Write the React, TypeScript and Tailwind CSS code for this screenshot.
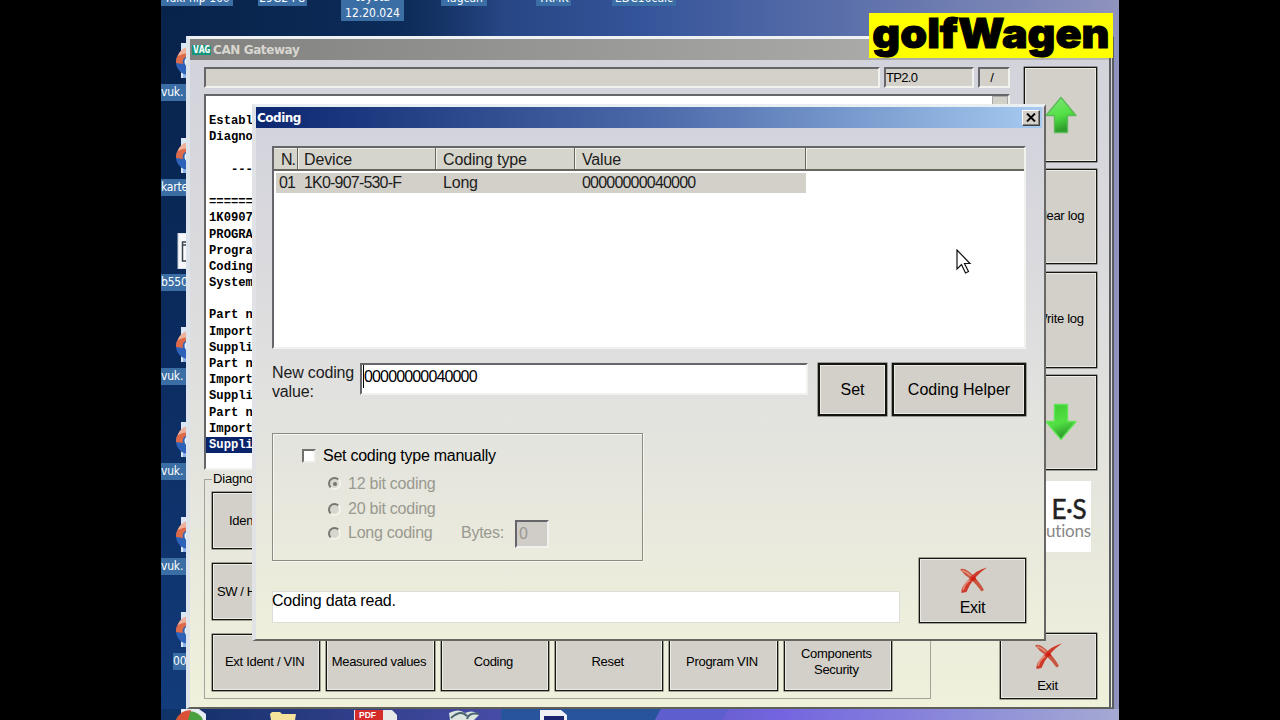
import type { ReactNode } from 'react'
import clsx from 'clsx'

const topLabels = [
  { text: 'Yuki hip 160', pos: 'left-0 w-[72px] -top-[10px]' },
  { text: '29G2 FU', pos: 'left-[97px] w-[49px] -top-[10px]' },
  { text: 'toyota 12.20.024', pos: 'left-[180px] w-[63px] -top-[11px]' },
  { text: 'Yagcan', pos: 'left-[280px] w-[46px] -top-[10px]' },
  { text: 'TKMK', pos: 'left-[375px] w-[35px] -top-[10px]' },
  { text: 'EDC16calc', pos: 'left-[451px] w-[64px] -top-[10px]' },
]

const sideIcons = [
  { text: 'vuk.', doc: false },
  { text: 'karte', doc: false },
  { text: 'b550', doc: true },
  { text: 'vuk.', doc: false },
  { text: 'vuk.', doc: false },
  { text: 'vuk.', doc: false },
  { text: '00', doc: false },
]

const logLines = [
  '',
  'Establ',
  'Diagno',
  '',
  '   ---',
  '',
  '======',
  '1K0907',
  'PROGRA',
  'Progra',
  'Coding',
  'System',
  '',
  'Part n',
  'Import',
  'Suppli',
  'Part n',
  'Import',
  'Suppli',
  'Part n',
  'Import',
  'Suppli',
]

const actions = ['Ext Ident / VIN', 'Measured values', 'Coding', 'Reset', 'Program VIN', 'Components Security']

function Swirl() {
  return (
    <svg viewBox="0 0 26 36" className="h-9 w-[26px]">
      <path d="M7 0h19v35H7z" fill="#dbe6f6" />
      <path d="M9 30h17v5H9z" fill="#8fb4ea" />
      <circle cx="15" cy="19" r="13" fill="#2e62b8" />
      <path d="M2 20A13 13 0 0 1 26 12L19 15A6 6 0 0 0 9 21z" fill="#dd6a48" />
      <path d="M4 13A13 13 0 0 1 26 8L20 11Q11 9 4 13z" fill="#eeb19b" />
      <circle cx="17" cy="19" r="6.500" fill="#f2f5fb" />
      <path d="M13 14v9h6" fill="none" stroke="#445" strokeWidth="1.5" />
    </svg>
  )
}

function DocIcon() {
  return (
    <svg viewBox="0 0 26 36" className="h-9 w-[26px]">
      <path d="M4 0h22v36H4z" fill="#f6f8fa" />
      <path d="M4 0h22v36H4z" fill="none" stroke="#c5ccd6" />
      <path d="M26 9H8.500v19h18M8.500 12h18" fill="none" stroke="#3c4450" strokeWidth="1.5" />
    </svg>
  )
}

function ArrowIcon({ down = false }: { down?: boolean }) {
  const id = down ? 'green-down' : 'green-up'
  return (
    <svg viewBox="0 0 32 38" className="h-[38px] w-8">
      <defs>
        <linearGradient id={id} x1="0" y1="0" x2="0.3" y2="1">
          <stop offset="0" stopColor={down ? '#3ccb30' : '#82e87c'} />
          <stop offset="0.6" stopColor="#52e044" />
          <stop offset="1" stopColor="#2c9c2b" />
        </linearGradient>
      </defs>
      <path
        d={down ? 'M16 36.500L31 18.500H22.500V1.500H9.500V18.500H1z' : 'M16 1.500L31 19.500H22.500V36.500H9.500V19.500H1z'}
        fill={`url(#${id})`}
        stroke={down ? '#62e655' : '#5cba58'}
        strokeWidth="1.4"
        strokeLinejoin="round"
      />
    </svg>
  )
}

function CrossIcon() {
  return (
    <svg viewBox="0 0 28 26" className="h-[26px] w-7">
      <path d="M1 2.500Q4 .5 9 4Q15 8 19 14Q23 19 25 23L22.500 24.500Q17 17 11.500 12Q5 8 1 2.500z" fill="#c85540" />
      <path d="M28 .5Q21 5 16 11Q10 18 7.500 25L2.500 26Q1 21 10 12Q17 3 28 .5z" fill="#cf3b2b" />
      <path d="M3 3.500Q8 5 12 9M4 23Q6 16 11 13" fill="none" stroke="#e58f7b" strokeWidth="1.6" />
      <path d="M12 11L16 9L17 13L13 14z" fill="#d21f12" />
    </svg>
  )
}

function PushButton({ className, children }: { className?: string; children: ReactNode }) {
  return (
    <button
      className={clsx(
        'flex items-center justify-center border-[#15150f] bg-[#d3d0c9] text-center text-black shadow-[inset_0_0_0_1px_#ecebe5,0_0_0_0.5px_#55554f]',
        className,
      )}
    >
      {children}
    </button>
  )
}

function Sunken({ className, children }: { className?: string; children?: ReactNode }) {
  return (
    <div
      className={clsx(
        'border-2 border-t-[#66666a] border-r-[#f1f1ee] border-b-[#f1f1ee] border-l-[#66666a]',
        className,
      )}
    >
      {children}
    </div>
  )
}

function GatewayWindow() {
  return (
    <section className="absolute top-9 left-[25px] flex h-[673px] w-[928px] flex-col border-t-[3px] border-r-[5px] border-b-2 border-l-4 border-t-[#eef1f4] border-r-[#5b5e60] border-b-[#5d5f58] border-l-[#dde3ea] bg-linear-to-b from-[#d2d2dc] via-[#dfdfde] to-[#f0f1db] [border-right-style:double]">
      <header className="flex h-[21px] shrink-0 items-center bg-linear-to-r from-[#81817f] to-[#b8b8b6] pl-0.5">
        <span className="flex h-2.5 w-[19px] items-center justify-center bg-[#15957d] font-['DejaVu_Sans_Mono'] text-[10px] font-bold tracking-[-0.4px] text-white">
          VAG
        </span>
        <h1 className="ml-0.5 font-['DejaVu_Sans'] text-[12px] font-bold tracking-[-0.4px] text-[#d8d6d0]">
          CAN Gateway
        </h1>
      </header>
      <div className="flex flex-col pt-[7px] pl-3.5">
        <div className="flex gap-3.5">
          <div className="flex w-[806px] flex-col">
            <div className="flex h-[21px] gap-1">
              <Sunken className="w-[676px] bg-[#d3d1c9]" />
              <Sunken className="flex w-[90px] items-center bg-[#d3d1c9] text-[13px] leading-none tracking-[-0.7px]">
                TP2.0
              </Sunken>
              <Sunken className="flex w-8 items-center justify-center bg-[#d3d1c9] pr-1 text-[13px] leading-none">
                /
              </Sunken>
            </div>
            <Sunken className="mt-1.5 flex h-[376px] justify-between bg-white">
              <div className="w-[180px] pt-px font-['Liberation_Mono'] text-[12.2px] leading-[16.2px] font-bold whitespace-pre">
                {logLines.map((line, i) => (
                  <div
                    key={i}
                    className={clsx('h-[16.2px] pl-[3px]', i === logLines.length - 1 && 'bg-[#0a246a] text-white')}
                  >
                    {line}
                  </div>
                ))}
              </div>
              <div className="flex w-4 flex-col bg-[#eceae6]">
                <div className="flex h-4 items-center justify-center border border-[#aaa] bg-[#d3d0c9] pt-1 text-[7px]">
                  ▲
                </div>
              </div>
            </Sunken>
          </div>
          <div className="flex h-[403px] w-[73px] flex-col justify-between text-[13px] tracking-[-0.3px]">
            <PushButton className="h-[95px] border">
              <ArrowIcon />
            </PushButton>
            <PushButton className="h-[95px] border pr-0.5 pb-0.5">Clear log</PushButton>
            <PushButton className="h-[96px] border pr-0.5 pb-0.5">Write log</PushButton>
            <PushButton className="h-[95px] border">
              <ArrowIcon down />
            </PushButton>
          </div>
        </div>
        <div className="flex w-[893px] justify-between">
          <fieldset className="mt-px h-[228px] w-[727px] border border-[#a3a39a] pl-[7px] text-[13px]">
            <legend className="h-4 px-px leading-4 tracking-[-0.2px]">Diagno</legend>
            <div className="flex w-[680px] flex-col gap-3.5 pt-[5px]">
              <PushButton className="h-[57px] w-[108px] border">
                <span className="w-full pl-4 text-left tracking-[-0.3px]">Iden</span>
              </PushButton>
              <PushButton className="h-[57px] w-[108px] border">
                <span className="w-full pl-1 text-left tracking-[-0.4px]">SW / H</span>
              </PushButton>
              <div className="grid grid-cols-6 gap-x-1.5">
                {actions.map((a) => (
                  <PushButton key={a} className="h-[57px] border pr-[3px] pb-0.5 leading-4 tracking-[-0.3px]">
                    {a}
                  </PushButton>
                ))}
              </div>
            </div>
          </fieldset>
          <div className="flex h-[229px] flex-col items-end justify-between pt-[11px]">
            <div className="mr-1.5 flex h-[71px] w-[90px] flex-col items-end bg-white pt-[15px] font-['Lato']">
              <span className="h-[26px] pr-[5px] text-[26px] leading-[26px] tracking-[-0.5px] text-[#222] [-webkit-text-stroke:0.5px_#222]">
                E·S
              </span>
              <span className="h-5 text-[17px] leading-[18px] tracking-[-0.2px] text-[#888]">utions</span>
            </div>
            <PushButton className="h-[66px] w-[97px] flex-col gap-[9px] border pt-1 pr-0.5 text-[13px] leading-4 tracking-[-0.3px]">
              <CrossIcon />
              Exit
            </PushButton>
          </div>
        </div>
      </div>
    </section>
  )
}

function Radio({ label, checked = false }: { label: string; checked?: boolean }) {
  return (
    <label className="flex items-center text-[#99998f]">
      <span className="mr-[7px] flex size-[13px] items-center justify-center rounded-full border-2 border-t-[#77776f] border-r-[#f4f4ea] border-b-[#f4f4ea] border-l-[#77776f] bg-[#d8d6ce]">
        {checked && <span className="size-1 rounded-full bg-[#77776f]" />}
      </span>
      {label}
    </label>
  )
}

function CodingDialog() {
  return (
    <section className="absolute top-[104px] left-[91px] flex h-[537px] w-[794px] flex-col border-t-[3px] border-r-2 border-b-2 border-l-4 border-t-[#e9eef2] border-r-[#686866] border-b-[#686860] border-l-[#e0e2e5] bg-linear-to-b from-[#d2d2dc] via-[#e0e0df] to-[#efefdc] text-[16px]">
      <header className="mr-0.5 flex h-[21px] shrink-0 items-center justify-between bg-linear-to-r from-[#0c2770] via-[#4b68a8] to-[#a6caf0] pr-0.5 pl-px">
        <h2 className="font-['DejaVu_Sans'] text-[12px] font-bold tracking-[-0.5px] text-white">Coding</h2>
        <button
          aria-label="Close"
          className="flex h-4 w-[18px] items-center justify-center border border-t-white border-r-[#404040] border-b-[#404040] border-l-white bg-[#d4d0c8] shadow-[inset_-1px_-1px_0_#808080]"
        >
          <svg viewBox="0 0 10 9" className="h-[9px] w-2.5">
            <path d="M1 .5l8 8M9 .5l-8 8" stroke="#000" strokeWidth="1.9" />
          </svg>
        </button>
      </header>

      <div className="flex flex-col pt-[18px] pl-4">
        <Sunken className="h-[203px] w-[754px] bg-white">
          <div className="flex h-[23px] bg-[#d6d5cb] leading-[23px] tracking-[-0.15px] text-[#1c1c1c] shadow-[inset_0_1px_0_#ecebe4]">
            <div className="w-6 border-r border-b-2 border-[#66665f] pl-[7px] tracking-[-1px]">N.</div>
            <div className="w-[138px] border-r border-b-2 border-[#66665f] pl-1.5 shadow-[inset_1px_0_0_#f2f1ea]">
              Device
            </div>
            <div className="w-[139px] border-r border-b-2 border-[#66665f] pl-[7px] shadow-[inset_1px_0_0_#f2f1ea]">
              Coding type
            </div>
            <div className="w-[231px] border-r border-b-2 border-[#66665f] pl-[7px] shadow-[inset_1px_0_0_#f2f1ea]">
              Value
            </div>
            <div className="flex-1 border-b-2 border-[#66665f] shadow-[inset_1px_0_0_#f2f1ea]" />
          </div>
          <div className="mt-0.5 ml-0.5 flex h-5 w-[530px] bg-[#d3d0ca] leading-5 tracking-[-0.8px] text-[#1c1c1c]">
            <div className="w-[28px] pl-[3px]">01</div>
            <div className="w-[139px]">1K0-907-530-F</div>
            <div className="w-[139px] tracking-[-0.2px]">Long</div>
            <div>00000000040000</div>
          </div>
        </Sunken>

        <div className="mt-3.5 flex h-[53px]">
          <div className="w-[88px] pt-px leading-[18.5px] tracking-[-0.15px] text-[#1c1c1c]">
            New coding
            <br />
            value:
          </div>
          <Sunken className="flex h-8 w-[448px] bg-white pl-px">
            <span className="h-[23px] border-l border-black leading-[23px] tracking-[-0.85px]">00000000040000</span>
          </Sunken>
          <PushButton className="ml-2.5 w-[69px] border-2">Set</PushButton>
          <PushButton className="ml-[5px] w-[134px] border-2">Coding Helper</PushButton>
        </div>

        <div className="mt-[17px] flex h-[190px] w-[754px] items-end justify-between">
          <div className="flex h-full flex-col justify-between">
            <div className="h-32 w-[371px] border border-[#8c8c85] pt-[13px] pl-[29px] shadow-[1px_1px_0_#f7f7ee,inset_1px_1px_0_#f7f7ee]">
              <label className="flex h-[18px] items-center tracking-[-0.25px]">
                <span className="mr-[7px] size-3.5 border-2 border-t-[#70706c] border-r-[#ecece4] border-b-[#ecece4] border-l-[#70706c] bg-white" />
                Set coding type manually
              </label>
              <div className="flex flex-col pl-[26px] tracking-[-0.25px]">
                <div className="flex h-[37px] items-center">
                  <Radio label="12 bit coding" checked />
                </div>
                <div className="flex h-3.5 items-center">
                  <Radio label="20 bit coding" />
                </div>
                <div className="flex h-[34px] items-center text-[#99998f]">
                  <div className="w-[133px]">
                    <Radio label="Long coding" />
                  </div>
                  <span className="w-[54px]">Bytes:</span>
                  <Sunken className="mt-0.5 h-7 w-[34px] bg-[#d0cdc8] pl-0.5 leading-6">0</Sunken>
                </div>
              </div>
            </div>
            <div className="h-8 w-[628px] border border-[#deded8] bg-white leading-[18px] tracking-[-0.2px]">
              <span className="-ml-px">Coding data read.</span>
            </div>
          </div>
          <PushButton className="h-[65px] w-[107px] flex-col gap-1.5 border pt-[3px] leading-[18px] tracking-[-0.3px]">
            <CrossIcon />
            Exit
          </PushButton>
        </div>
      </div>
    </section>
  )
}

function DesktopFooter() {
  return (
    <div className="absolute inset-x-0 bottom-0 h-[11px] overflow-hidden bg-linear-to-r from-[#0e2e66] via-[#7465df] via-65% to-[#a5a9d2]">
      <svg viewBox="0 0 958 11" className="h-[11px] w-[958px]">
        <path d="M0 0H40V11H0z" fill="#113468" />
        <path d="M340 0H500L494 11H340z" fill="#28549d" />
        <path d="M500 0H567L561 11H494z" fill="#5e5ecf" />
        <path d="M20 0h18l7 5v6H20z" fill="#e8eef5" />
        <path d="M15 11a14 12 0 0 1 27 0z" fill="#48a13e" />
        <path d="M15 11Q19 1 30 1L27 11z" fill="#da5138" />
        <path d="M109 5l2-2h8l2 2h14l-1 6h-24z" fill="#f3e39b" />
        <path d="M193 1h38l5 5v5h-43z" fill="#e7e8e8" />
        <path d="M194 1h28v10h-28z" fill="#d42b2b" />
        <text x="198" y="9" fontSize="8.5" fontWeight="bold" fill="#fff" fontFamily="Liberation Sans">
          PDF
        </text>
        <path d="M288 4q10-5 16 0q8-4 14 2l-5 5h-24z" fill="#dce6df" />
        <path d="M290 9q10-9 16-2M306 10q2-7 12-5" fill="none" stroke="#4a6570" strokeWidth="2" />
        <path d="M379 1h21l6 5v5h-27z" fill="#eef0f4" />
        <path d="M383 7h20v4h-20z" fill="#1c2470" />
      </svg>
    </div>
  )
}

export default function App() {
  return (
    <main className="flex h-[720px] w-[1280px] justify-center overflow-hidden bg-black font-['Liberation_Sans',sans-serif] text-black">
      <div className="relative h-[720px] w-[958px] overflow-hidden bg-linear-to-r from-[#082550] via-[#34549a] via-50% to-[#8f93bd]">
        <div className="absolute inset-y-0 left-0 w-[340px] bg-linear-to-r from-[#08234a] via-[#0c2b58] via-70% to-transparent" />
        <div className="absolute inset-y-0 left-0 w-[26px] bg-linear-to-b from-[#08234a] via-[#0b2c60] to-[#133c7b]" />
        {topLabels.map((l) => (
          <div
            key={l.text}
            className={clsx(
              "absolute bg-[#3a6ea5] text-center font-['DejaVu_Sans_Condensed','DejaVu_Sans'] text-[12px] leading-4 text-white",
              l.pos,
            )}
          >
            {l.text}
          </div>
        ))}
        <div className="absolute top-[43px] left-0 flex w-7 flex-col">
          {sideIcons.map((s, i) => (
            <div key={i} className="flex h-[94.8px] flex-col">
              <div className="ml-[13px] w-[26px]">{s.doc ? <DocIcon /> : <Swirl />}</div>
              <div
                className={clsx(
                  "mt-[5px] h-[17px] overflow-hidden bg-[#3a6ea5] font-['DejaVu_Sans_Condensed','DejaVu_Sans'] text-[12px] leading-[17px] tracking-[-0.2px] text-white",
                  s.text === '00' && 'ml-3',
                )}
              >
                {s.text}
              </div>
            </div>
          ))}
        </div>
        <DesktopFooter />
        <GatewayWindow />
        <CodingDialog />

        <svg viewBox="0 0 16 26" className="absolute top-[249px] left-[795px] h-[26px] w-4">
          <path
            d="M1 1v19l4.500-4.500L9.500 24l3-1.500-4-8H14z"
            fill="#fff"
            stroke="#111"
            strokeWidth="1.2"
          />
        </svg>

        <div className="absolute top-[13px] left-[708px] flex h-[45px] w-[244px] items-center justify-center bg-[#ffff00]">
          <span className="mb-[5px] scale-x-[1.05] font-['Inter'] text-[41px] leading-none font-black text-black [-webkit-text-stroke:1px_#000]">
            golfWagen
          </span>
        </div>
      </div>
    </main>
  )
}
